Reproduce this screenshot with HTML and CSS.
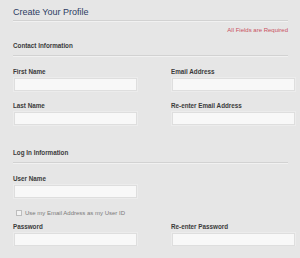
FILE: index.html
```html
<!DOCTYPE html>
<html lang="en">
<head>
  <meta charset="UTF-8">
  <meta name="viewport" content="width=device-width, initial-scale=1.0">
  <title>Create Your Profile</title>
  <link rel="stylesheet" href="styles.css">
</head>
<body>
  <div class="profile-form">
    <h1 class="form-title">Create Your Profile</h1>
    <div class="required-note">All Fields are Required</div>

    <div class="section-title">Contact Information</div>
    <div class="field-grid">
      <div class="field">
        <label for="firstName">First Name</label>
        <input type="text" id="firstName">
      </div>
      <div class="field">
        <label for="email">Email Address</label>
        <input type="text" id="email">
      </div>
      <div class="field">
        <label for="lastName">Last Name</label>
        <input type="text" id="lastName">
      </div>
      <div class="field">
        <label for="email2">Re-enter Email Address</label>
        <input type="text" id="email2">
      </div>
    </div>

    <div class="section-title login-title">Log In Information</div>
    <div class="field-grid">
      <div class="field">
        <label for="userName">User Name</label>
        <input type="text" id="userName">
      </div>
    </div>

    <div class="check-row">
      <span class="check-box"></span>
      <span>Use my Email Address as my User ID</span>
    </div>

    <div class="field-grid password-grid">
      <div class="field">
        <label for="password">Password</label>
        <input type="password" id="password">
      </div>
      <div class="field">
        <label for="password2">Re-enter Password</label>
        <input type="password" id="password2">
      </div>
    </div>
  </div>
</body>
</html>
```

FILE: styles.css
```css
body {
  margin: 0;
  padding: 0;
  background-color: #e6e6e6;
  font-family: "Liberation Sans", Arial, sans-serif;
  overflow: hidden;
}

.profile-form {
  padding: 0 5px 0 13px;
}

.form-title {
  margin: 0 7px 0 0;
  padding-top: 5px;
  font-size: 9px;
  font-weight: normal;
  line-height: 15px;
  color: #2d3c63;
  border-bottom: 1px solid #d2d2d2;
  box-shadow: 0 1px 0 #f1f1f1;
}

.required-note {
  margin: 5px 7px 0 0;
  font-size: 6px;
  line-height: 8px;
  text-align: right;
  color: #c9505f;
}

.section-title {
  margin: 8px 7px 0 0;
  padding-bottom: 5px;
  font-size: 6.3px;
  font-weight: bold;
  line-height: 8px;
  color: #3a3a3a;
  border-bottom: 1px solid #d2d2d2;
  box-shadow: 0 1px 0 #f1f1f1;
}

.login-title {
  margin-top: 24px;
}

.field-grid {
  display: grid;
  grid-template-columns: 158px 1fr;
  row-gap: 11px;
  margin-top: 12px;
}

.field label {
  display: block;
  font-size: 6.3px;
  font-weight: bold;
  line-height: 8px;
  color: #3a3a3a;
}

.field input {
  display: block;
  box-sizing: border-box;
  width: 123px;
  height: 13px;
  margin: 2px 0 0 1px;
  padding: 0;
  background-color: #f8f8f8;
  border: 1px solid #dedede;
  box-shadow: 0 0 0 1px #ececec;
}

.check-row {
  display: flex;
  align-items: center;
  gap: 3px;
  margin: 11px 0 0 3px;
  font-size: 6px;
  line-height: 8px;
  color: #7a7a7a;
}

.check-box {
  box-sizing: border-box;
  width: 6px;
  height: 6px;
  background-color: #f2f2f2;
  border: 1px solid #bdbdbd;
}

.password-grid {
  margin-top: 6px;
}
```
